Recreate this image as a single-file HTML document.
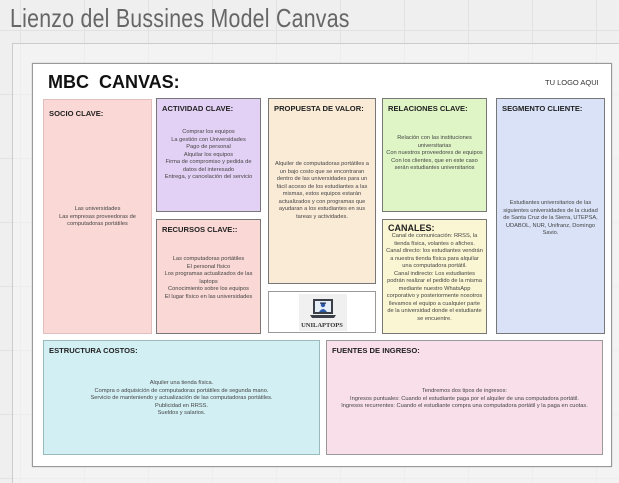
<!DOCTYPE html>
<html><head><meta charset="utf-8"><style>
*{margin:0;padding:0;box-sizing:border-box}
body{width:619px;height:480px;overflow:hidden;position:relative;font-family:"Liberation Sans",sans-serif;
background-color:#efefef;
background-image:linear-gradient(#e2e2e2 1px,transparent 1px),linear-gradient(90deg,#e2e2e2 1px,transparent 1px);
background-size:64px 64px;background-position:20px 30px}
.t{position:absolute;left:10px;top:3px;font-size:26px;color:#666;font-weight:normal;letter-spacing:0.3px;transform:scaleX(0.82);transform-origin:left}
.frame{position:absolute;left:12px;top:43px;width:620px;height:440px;border:1px solid #ccc;border-right:none;border-bottom:none;background:rgba(245,245,245,.6)}
.card{position:absolute;left:32px;top:63px;width:580px;height:404px;background:#fff;border:1px solid #999;box-shadow:0 0 1px #aaa}
.mbc{position:absolute;left:48px;top:72px;font-size:18px;font-weight:bold;color:#111}
.logo{position:absolute;left:545px;top:78px;font-size:7.5px;color:#333}
.b{position:absolute;border:1px solid #777;font-size:5.7px;line-height:7.5px;color:#444;text-align:center}
.b h{display:block;position:absolute;left:5px;top:6px;font-size:7.6px;font-weight:bold;color:#222;text-align:left;white-space:nowrap}
.b p{position:absolute;left:3px;right:3px}
</style></head><body>
<div class="t">Lienzo del Bussines Model Canvas</div>
<div class="frame"></div>
<div class="card"></div>
<div class="mbc">MBC&nbsp; CANVAS:</div>
<div class="logo">TU LOGO AQUI</div>

<div class="b" style="left:43px;top:99px;width:109px;height:235px;background:#f9d8d5;border-color:#e0c0bd">
<h style="top:10px">SOCIO CLAVE:</h>
<p style="top:106px">Las universidades<br>Las empresas proveedoras de<br>computadoras portátiles</p></div>

<div class="b" style="left:156px;top:98px;width:105px;height:114px;background:#e3d1f5">
<h>ACTIVIDAD CLAVE:</h>
<p style="top:30px">Comprar los equipos<br>La gestión con Universidades<br>Pago de personal<br>Alquilar los equipos<br>Firma de compromiso y pedida de datos del interesado<br>Entrega, y cancelación del servicio</p></div>

<div class="b" style="left:156px;top:219px;width:105px;height:115px;background:#f9d8d5">
<h>RECURSOS CLAVE::</h>
<p style="top:36px">Las computadoras portátiles<br>El personal físico<br>Los programas actualizados de las laptops<br>Conocimiento sobre los equipos<br>El lugar físico en las universidades</p></div>

<div class="b" style="left:268px;top:98px;width:108px;height:186px;background:#faebd7">
<h>PROPUESTA DE VALOR:</h>
<p style="top:62px">Alquiler de computadoras portátiles a un bajo costo que se encontraran dentro de las universidades para un fácil acceso de los estudiantes a las mismas, estos equipos estarán actualizados y con programas que ayudaran a los estudiantes en sus tareas y actividades.</p></div>

<div class="b" style="left:268px;top:291px;width:108px;height:42px;background:#fff;border-color:#999">
<div style="position:absolute;left:30px;top:2px;width:48px;height:37px;background:#f0f0f0"></div>
<svg style="position:absolute;left:40px;top:5px" width="28" height="24" viewBox="0 0 28 24"><rect x="4" y="2" width="20" height="15" fill="#3a3f48"/><rect x="6" y="4" width="16" height="11" fill="#e6eef8"/><circle cx="14" cy="8" r="2.2" fill="#2a5aa8"/><path d="M10 15 Q14 9 18 15Z" fill="#2a5aa8"/><rect x="11" y="5.5" width="6" height="1.2" fill="#1b2e55"/><path d="M1 18 H27 L25 21 H3Z" fill="#3a3f48"/></svg>
<div style="position:absolute;left:0;right:0;top:30px;font-size:6.5px;font-weight:bold;color:#333;font-family:'Liberation Serif',serif">UNILAPTOPS</div></div>

<div class="b" style="left:382px;top:98px;width:105px;height:114px;background:#dff5c6">
<h>RELACIONES CLAVE:</h>
<p style="top:36px">Relación con las instituciones universitarias<br>Con nuestros proveedores de equipos<br>Con los clientes, que en este caso serán estudiantes universitarios</p></div>

<div class="b" style="left:382px;top:219px;width:105px;height:115px;background:#faf5d2">
<h style="font-size:9px;top:5px">CANALES:</h>
<p style="top:13px">Canal de comunicación: RRSS, la tienda física, volantes o afiches.<br>Canal directo: los estudiantes vendrán a nuestra tienda física para alquilar una computadora portátil.<br>Canal indirecto: Los estudiantes podrán realizar el pedido de la misma mediante nuestro WhatsApp corporativo y posteriormente nosotros llevamos el equipo a cualquier parte de la universidad donde el estudiante se encuentre.</p></div>

<div class="b" style="left:496px;top:98px;width:109px;height:236px;background:#d9e2f7">
<h>SEGMENTO CLIENTE:</h>
<p style="top:101px">Estudiantes universitarios de las siguientes universidades de la ciudad de Santa Cruz de la Sierra, UTEPSA, UDABOL, NUR, Unifranz, Domingo Savio.</p></div>

<div class="b" style="left:43px;top:340px;width:277px;height:115px;background:#d2eff3;border-color:#9bb">
<h>ESTRUCTURA COSTOS:</h>
<p style="top:39px">Alquiler una tienda física.<br>Compra o adquisición de computadoras portátiles de segunda mano.<br>Servicio de manteniendo y actualización de las computadoras portátiles.<br>Publicidad en RRSS.<br>Sueldos y salarios.</p></div>

<div class="b" style="left:326px;top:340px;width:277px;height:115px;background:#f8dfe9;border-color:#999">
<h>FUENTES DE INGRESO:</h>
<p style="top:47px">Tendremos dos tipos de ingresos:<br>Ingresos puntuales: Cuando el estudiante paga por el alquiler de una computadora portátil.<br>Ingresos recurrentes: Cuando el estudiante compra una computadora portátil y la paga en cuotas.</p></div>
</body></html>
